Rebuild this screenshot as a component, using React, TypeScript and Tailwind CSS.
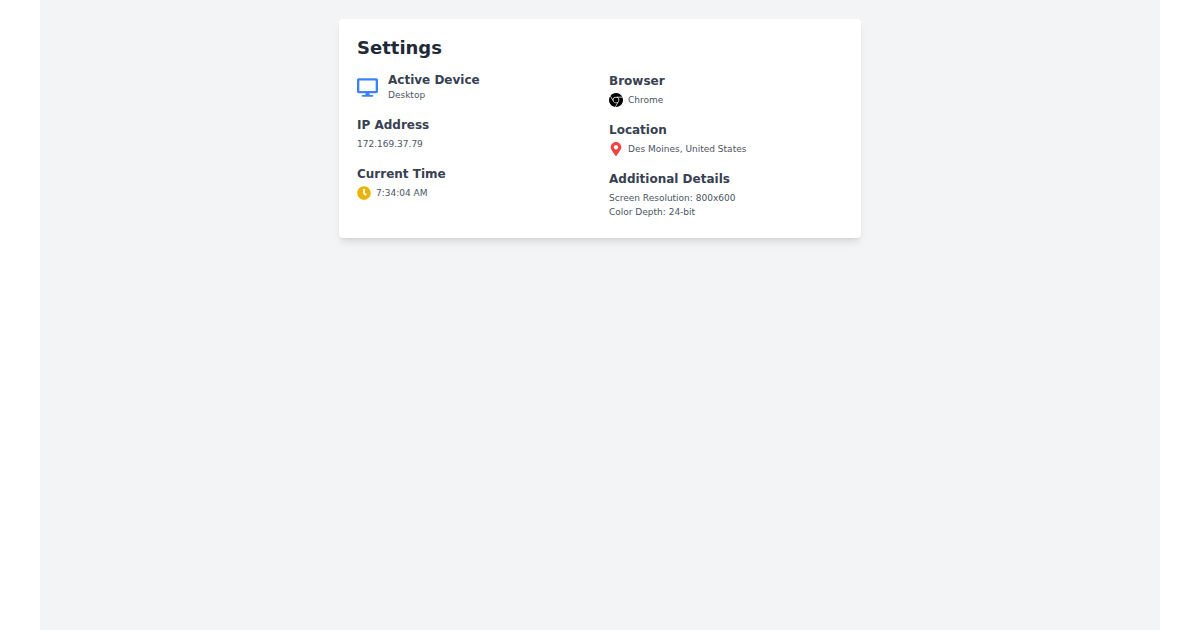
import { FaClock, FaDesktop, FaMapMarkerAlt } from 'react-icons/fa';
import { SiGooglechrome } from 'react-icons/si';

const device = {
  type: 'Desktop',
  ip: '172.169.37.79',
  time: '7:34:04 AM',
  browser: 'Chrome',
  location: 'Des Moines, United States',
  resolution: '800x600',
  colorDepth: '24-bit',
};

export default function Settings() {
  return (
    <div className="mx-10 min-h-screen bg-[#f3f4f6] px-6 pt-[19px] font-['DejaVu_Sans',sans-serif] text-[9px] leading-[14px] text-[#4b5563]">
      <div className="mx-auto max-w-[522px] rounded bg-white px-[18px] pt-[17px] pb-[19px] shadow-[0_6px_9px_-2px_rgba(0,0,0,0.1),0_2px_4px_-2px_rgba(0,0,0,0.1)]">
        <h1 className="mb-[13px] text-[18px] leading-6 font-bold text-[#1f2937]">Settings</h1>

        <div className="grid grid-cols-2 gap-[18px]">
          <div className="flex flex-col gap-[15px]">
            <div className="flex items-center">
              <FaDesktop className="mr-[10px] size-[21px] text-[#3b82f6]" />
              <div>
                <h2 className="text-xs leading-[15px] font-bold text-[#374151]">Active Device</h2>
                <p>{device.type}</p>
              </div>
            </div>
            <div>
              <h2 className="mb-1 text-xs leading-4 font-bold text-[#374151]">IP Address</h2>
              <p>{device.ip}</p>
            </div>
            <div>
              <h2 className="mb-1 text-xs leading-4 font-bold text-[#374151]">Current Time</h2>
              <div className="flex items-center">
                <FaClock className="mr-[5px] size-[14px] text-[#eab308]" />
                <p>{device.time}</p>
              </div>
            </div>
          </div>

          <div className="flex flex-col gap-[15px]">
            <div>
              <h2 className="mb-1 text-xs leading-4 font-bold text-[#374151]">Browser</h2>
              <div className="flex items-center">
                <SiGooglechrome className="mr-[5px] size-[14px] text-black" />
                <p>{device.browser}</p>
              </div>
            </div>
            <div>
              <h2 className="mb-1 text-xs leading-4 font-bold text-[#374151]">Location</h2>
              <div className="flex items-center">
                <FaMapMarkerAlt className="mr-[5px] size-[14px] text-[#ef4444]" />
                <p>{device.location}</p>
              </div>
            </div>
            <div>
              <h2 className="mb-1 text-xs leading-4 font-bold text-[#374151]">Additional Details</h2>
              <p>Screen Resolution: {device.resolution}</p>
              <p>Color Depth: {device.colorDepth}</p>
            </div>
          </div>
        </div>
      </div>
    </div>
  );
}
